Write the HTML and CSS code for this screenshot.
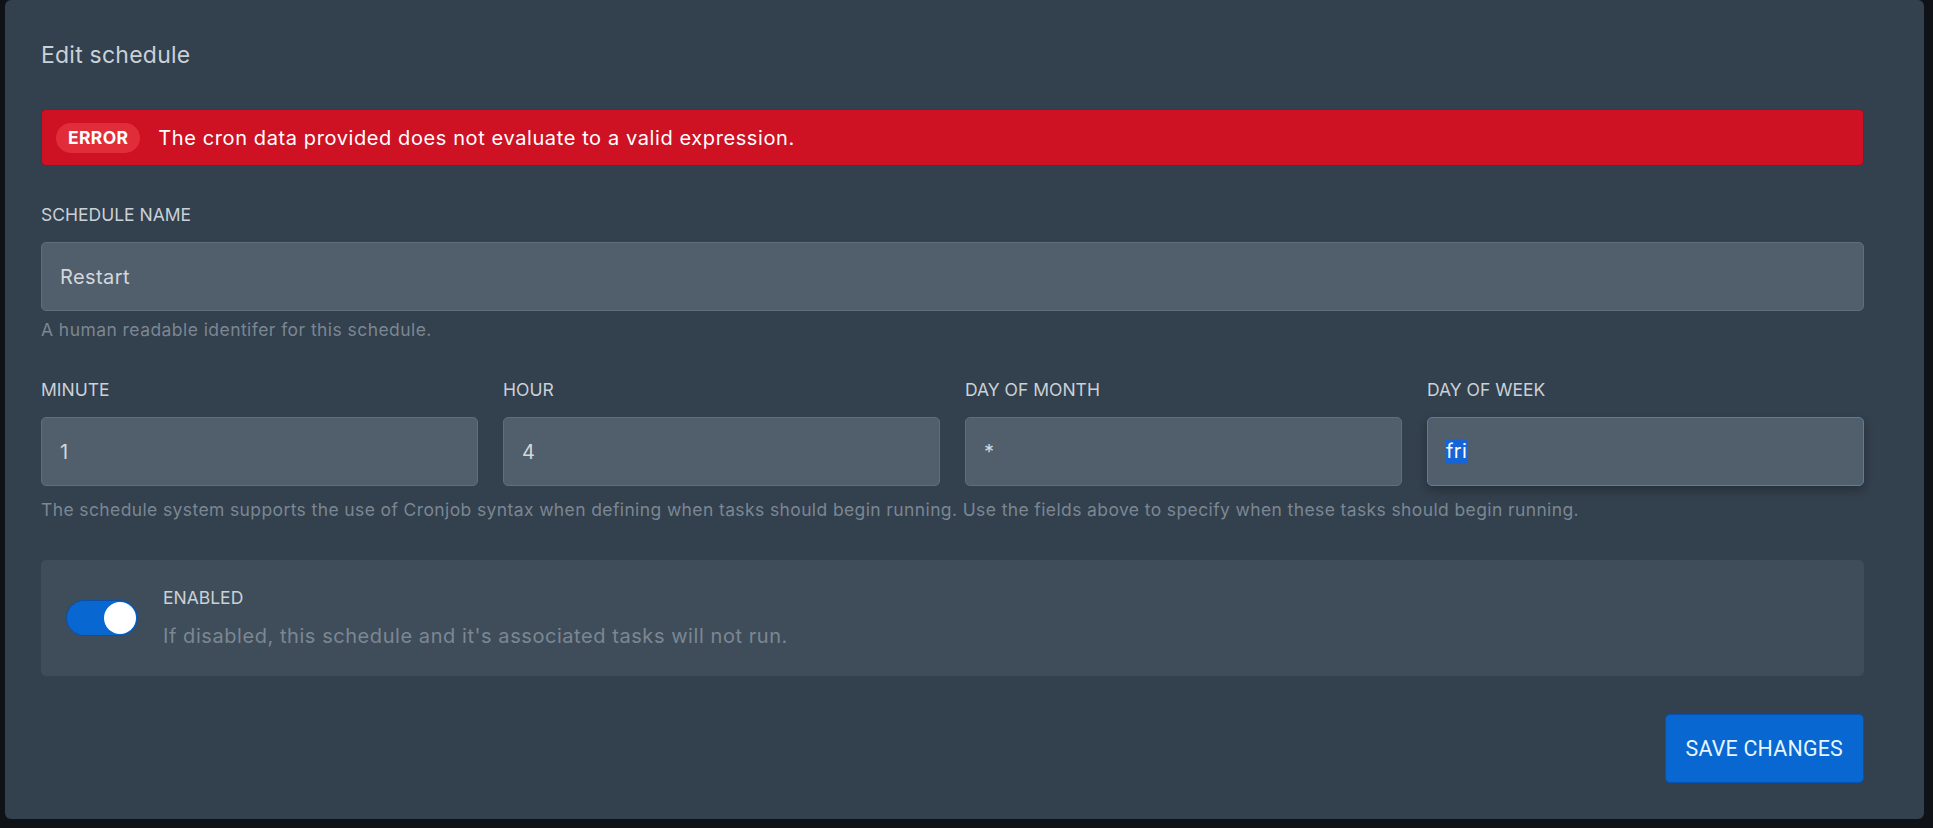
FILE: index.html
```html
<!DOCTYPE html>
<html lang="en">
<head>
<meta charset="utf-8">
<title>Edit schedule</title>
<link rel="stylesheet" href="styles.css">
</head>
<body>
<div class="card">
  <h2 class="title">Edit schedule</h2>
  <div class="alert">
    <span class="badge">ERROR</span>
    <span class="alert-msg">The cron data provided does not evaluate to a valid expression.</span>
  </div>

  <div class="field field-name">
    <label class="label">Schedule Name</label>
    <div class="input">Restart</div>
    <p class="help help-name">A human readable identifer for this schedule.</p>
  </div>

  <div class="cron-grid">
    <div class="cron-col">
      <label class="label">Minute</label>
      <div class="input">1</div>
    </div>
    <div class="cron-col">
      <label class="label">Hour</label>
      <div class="input">4</div>
    </div>
    <div class="cron-col">
      <label class="label">Day of month</label>
      <div class="input">*</div>
    </div>
    <div class="cron-col">
      <label class="label">Day of week</label>
      <div class="input input-focus"><span class="sel">fri</span></div>
    </div>
  </div>
  <p class="help help-cron">The schedule system supports the use of Cronjob syntax when defining when tasks should begin running. Use the fields above to specify when these tasks should begin running.</p>

  <div class="switch-box">
    <div class="switch"><span class="knob"></span></div>
    <div class="switch-text">
      <div class="switch-label">Enabled</div>
      <div class="switch-desc">If disabled, this schedule and it's associated tasks will not run.</div>
    </div>
  </div>

  <div class="actions">
    <button class="btn-primary" type="button">Save Changes</button>
  </div>
</div>
</body>
</html>
```
FILE: styles.css
```css
* { box-sizing: border-box; }

html, body {
  margin: 0;
  padding: 0;
  background: #0f1317;
}

body {
  font-family: Inter, "Noto Sans", Arial, sans-serif;
  padding: 0 9px 11px 5px;
}

.card {
  background: #33404d;
  border-radius: 6px;
  padding: 40px 60px 36px 36px;
  min-height: 817px;
}

.title {
  margin: 0;
  font-size: 23px;
  line-height: 30px;
  font-weight: 400;
  letter-spacing: 0.01em;
  color: #cad1d8;
}

.alert {
  margin-top: 39px;
  height: 57px;
  display: flex;
  align-items: center;
  padding: 0 14px;
  background: #cf1124;
  border: 1px solid #a50b1c;
  border-radius: 5px;
  color: #ffffff;
}

.badge {
  display: inline-flex;
  align-items: center;
  justify-content: center;
  height: 30px;
  padding: 0 12px;
  border-radius: 15px;
  background: #e12d39;
  font-weight: 700;
  font-size: 17.5px;
  letter-spacing: 0.02em;
}

.alert-msg {
  margin-left: 18px;
  font-size: 20px;
  letter-spacing: 0.03em;
}

.field-name {
  margin-top: 36px;
}

.label {
  display: block;
  font-size: 17.5px;
  line-height: 26px;
  text-transform: uppercase;
  color: #cad1d8;
  margin-bottom: 14px;
}

.input {
  height: 69px;
  display: flex;
  align-items: center;
  padding: 0 18px;
  background: #515f6c;
  border: 1px solid #606d7b;
  border-radius: 5px;
  font-size: 20px;
  letter-spacing: 0.02em;
  color: #d2d8de;
}

.input-focus {
  border-color: #2f86e8;
  box-shadow: 0 4px 10px rgba(0, 0, 0, 0.28);
}

.sel {
  background: #1565d6;
  color: #ffffff;
  line-height: 25px;
}

.help {
  margin: 0;
  font-size: 17.5px;
  line-height: 26px;
  letter-spacing: 0.025em;
  color: #7b8793;
}

.help-name {
  margin-top: 6px;
}

.cron-grid {
  margin-top: 34px;
  display: grid;
  grid-template-columns: repeat(4, 1fr);
  column-gap: 25px;
}

.help-cron {
  margin-top: 11px;
  letter-spacing: 0.022em;
}

.switch-box {
  margin-top: 37px;
  display: flex;
  align-items: center;
  padding: 25px 25px;
  background: #3f4d5a;
  border-radius: 5px;
}

.switch {
  flex: none;
  width: 72px;
  height: 36px;
  border-radius: 18px;
  background: #0967d2;
  border: 1px solid #0a4fa3;
  display: flex;
  align-items: center;
  justify-content: flex-end;
  padding-right: 1px;
}

.knob {
  width: 32px;
  height: 32px;
  border-radius: 50%;
  background: #ffffff;
}

.switch-text {
  margin-left: 25px;
}

.switch-label {
  font-size: 17.5px;
  line-height: 26px;
  text-transform: uppercase;
  color: #cad1d8;
  margin-bottom: 10px;
}

.switch-desc {
  font-size: 20px;
  line-height: 30px;
  letter-spacing: 0.028em;
  color: #7b8793;
}

.actions {
  margin-top: 38px;
  display: flex;
  justify-content: flex-end;
}

.btn-primary {
  height: 69px;
  padding: 0 20px;
  background: #0967d2;
  border: 1px solid #0552b5;
  border-radius: 5px;
  color: #e6f6ff;
  font-family: Roboto, "Liberation Sans", Arial, sans-serif;
  font-size: 21.4px;
  letter-spacing: 0.01em;
  text-transform: uppercase;
  cursor: pointer;
}
```
